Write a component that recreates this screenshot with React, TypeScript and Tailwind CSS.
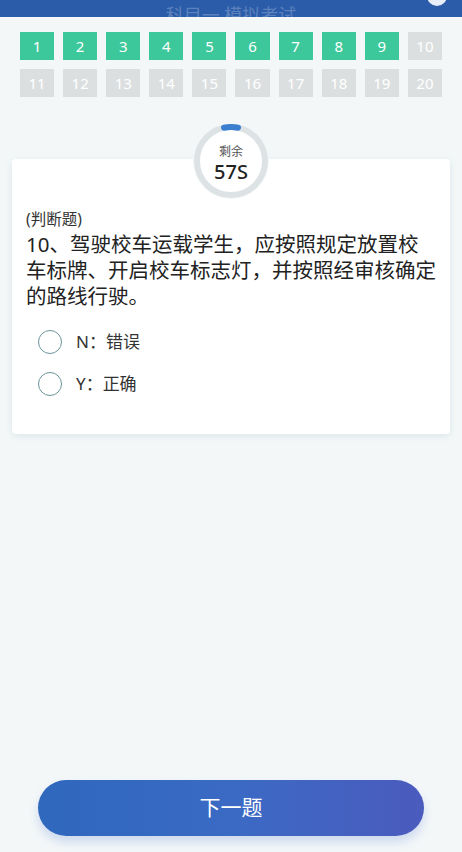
const answered = [1, 2, 3, 4, 5, 6, 7, 8, 9];
const numbers = Array.from({ length: 20 }, (_, i) => i + 1);

const options = [
  { key: "N", label: "错误" },
  { key: "Y", label: "正确" },
];

function Timer({ seconds }: { seconds: number }) {
  return (
    <div className="relative w-[76px] h-[76px] bg-[#f3f7f8] rounded-full">
      <svg width="76" height="76" viewBox="0 0 76 76" className="absolute inset-0">
        <circle cx="38" cy="38" r="34" fill="white" stroke="#dde2e4" strokeWidth="6" />
        <path d="M31 4.7 A34 34 0 0 1 45 4.7" fill="none" stroke="#3a7fd0" strokeWidth="6" strokeLinecap="round" />
      </svg>
      <div className="absolute inset-0 flex flex-col items-center justify-center pt-[6px]">
        <span className="text-[12px] leading-[15px] text-[#555]">剩余</span>
        <span className="text-[20px] leading-[25px] text-[#222] font-medium">{seconds}S</span>
      </div>
    </div>
  );
}

export default function App() {
  return (
    <div
      className="w-[462px] h-[852px] bg-[#f3f7f8] flex flex-col overflow-hidden"
      style={{ fontFamily: '"Noto Sans", "Noto Sans CJK SC", sans-serif' }}
    >
      <div className="h-[17px] bg-[#2b5ca9] flex items-end justify-between overflow-hidden relative">
        <div className="flex-1 flex justify-center">
          <span className="text-[18px] leading-[18px] text-[#8ea6d0] -mb-[7px] opacity-50">科目一 模拟考试</span>
        </div>
        <div className="absolute right-[15px] -top-[14px] w-[20px] h-[20px] rounded-full bg-[#e8eef7]" />
      </div>

      <div className="pt-[15px] px-[20px] grid grid-cols-10 gap-x-[9px] gap-y-[9px]">
        {numbers.map((n) => (
          <div
            key={n}
            className={`h-[28px] flex items-center justify-center text-[15px] text-white ${
              answered.includes(n) ? "bg-[#3dc89b]" : "bg-[#dcdfe0]"
            }`}
          >
            {n}
          </div>
        ))}
      </div>

      <div className="flex justify-center mt-[26px] relative z-10">
        <Timer seconds={57} />
      </div>

      <div className="mx-[12px] -mt-[40px] bg-white rounded-[4px] shadow-[0_2px_6px_rgba(180,200,205,0.35)] pt-[50px] pb-[38px] pl-[14px] pr-[8px]">
        <p className="text-[15.5px] leading-[20px] text-[#333]">(判断题)</p>
        <p className="text-[20.5px] leading-[26px] text-[#222] mt-[2px] whitespace-nowrap">
          10、驾驶校车运载学生，应按照规定放置校
          <br />
          车标牌、开启校车标志灯，并按照经审核确定
          <br />
          的路线行驶。
        </p>
        <div className="mt-[21px] flex flex-col gap-[18px] pl-[12px]">
          {options.map((o) => (
            <div key={o.key} className="flex items-center h-[24px]">
              <div className="w-[24px] h-[24px] rounded-full border-[1.5px] border-[#6b9599] bg-white" />
              <span className="ml-[14px] text-[17px] text-[#333]">
                {o.key}：{o.label}
              </span>
            </div>
          ))}
        </div>
      </div>

      <div className="flex-1" />

      <div className="px-[38px] pb-[16px]">
        <button className="w-full h-[56px] rounded-full bg-gradient-to-r from-[#2f68bd] via-[#3a6ac4] to-[#4a5bbd] text-white text-[21px] shadow-[0_6px_10px_rgba(120,150,220,0.3)]">
          下一题
        </button>
      </div>
    </div>
  );
}
